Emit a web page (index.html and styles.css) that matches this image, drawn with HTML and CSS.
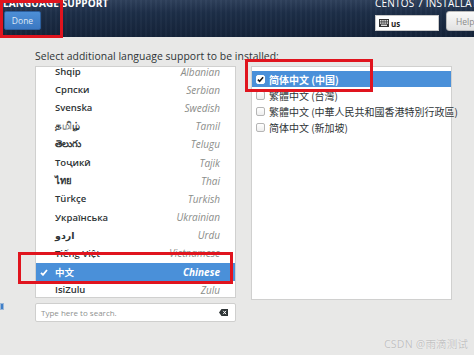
FILE: index.html
```html
<!DOCTYPE html>
<html>
<head>
<meta charset="utf-8">
<link rel="stylesheet" href="styles.css">
</head>
<body>
<div class="screen">
  <header class="topbar">
    <div class="spoke-left">
      <div class="spoke-title">LANGUAGE SUPPORT</div>
      <button class="done">Done</button>
    </div>
    <div class="spoke-right">
      <div class="product">CENTOS 7 INSTALLATION</div>
      <div class="right-controls">
        <div class="kbd">
          <svg class="kbd-icon" width="10" height="8" viewBox="0 0 10 8"><rect x="0" y="0" width="10" height="8" fill="#333"/><g fill="#ddd"><rect x="1" y="1" width="1.5" height="1.5"/><rect x="3.2" y="1" width="1.5" height="1.5"/><rect x="5.4" y="1" width="1.5" height="1.5"/><rect x="7.6" y="1" width="1.5" height="1.5"/><rect x="1" y="3.3" width="1.5" height="1.5"/><rect x="3.2" y="3.3" width="1.5" height="1.5"/><rect x="5.4" y="3.3" width="1.5" height="1.5"/><rect x="7.6" y="3.3" width="1.5" height="1.5"/><rect x="2" y="5.6" width="6" height="1.4"/></g></svg>
          <span>us</span>
        </div>
        <button class="help">Help!</button>
      </div>
    </div>
  </header>

  <main class="content">
    <div class="prompt">Select additional language support to be installed:</div>
    <div class="panels">
      <div class="left-col">
        <div class="lang-box">
          <ul class="lang-list">
            <li class="lang"><span class="native">Shqip</span><span class="english">Albanian</span></li>
            <li class="lang"><span class="native">Српски</span><span class="english">Serbian</span></li>
            <li class="lang"><span class="native">Svenska</span><span class="english">Swedish</span></li>
            <li class="lang"><span class="native">தமிழ்</span><span class="english">Tamil</span></li>
            <li class="lang"><span class="native">తెలుగు</span><span class="english">Telugu</span></li>
            <li class="lang"><span class="native">Тоҷикӣ</span><span class="english">Tajik</span></li>
            <li class="lang"><span class="native">ไทย</span><span class="english">Thai</span></li>
            <li class="lang"><span class="native">Türkçe</span><span class="english">Turkish</span></li>
            <li class="lang"><span class="native">Українська</span><span class="english">Ukrainian</span></li>
            <li class="lang"><span class="native">اردو</span><span class="english">Urdu</span></li>
            <li class="lang"><span class="native">Tiếng Việt</span><span class="english">Vietnamese</span></li>
            <li class="lang selected">
              <svg class="tick" width="8" height="7" viewBox="0 0 8 7"><path d="M1 3.8 L3 5.8 L7 1" fill="none" stroke="#fff" stroke-width="1.8"/></svg>
              <span class="native">中文</span><span class="english">Chinese</span>
            </li>
            <li class="lang"><span class="native">IsiZulu</span><span class="english">Zulu</span></li>
          </ul>
        </div>
        <div class="search">
          <span class="placeholder">Type here to search.</span>
          <svg class="clear" width="9" height="7" viewBox="0 0 9 7"><path d="M0 3.5 L2.5 0 H9 V7 H2.5 Z" fill="#2e3436"/><path d="M4.2 1.8 L7 5.2 M7 1.8 L4.2 5.2" stroke="#fff" stroke-width="1"/></svg>
        </div>
      </div>
      <div class="right-col">
        <ul class="locale-list">
          <li class="locale selected"><span class="cb checked"><svg width="8" height="7" viewBox="0 0 8 7"><path d="M1 3.6 L3 5.6 L7 1" fill="none" stroke="#1a1a1a" stroke-width="1.8"/></svg></span>简体中文 (中国)</li>
          <li class="locale"><span class="cb"></span>繁體中文 (台灣)</li>
          <li class="locale"><span class="cb"></span>繁體中文 (中華人民共和國香港特別行政區)</li>
          <li class="locale"><span class="cb"></span>简体中文 (新加坡)</li>
        </ul>
      </div>
    </div>
  </main>

  <div class="mark mark-done"></div>
  <div class="mark mark-chinese"></div>
  <div class="mark mark-locale"></div>
  <div class="edge-icon"></div>
  <div class="watermark">CSDN @雨滴测试</div>
</div>
</body>
</html>
```

FILE: styles.css
```css
* { box-sizing: border-box; }
html, body { margin: 0; padding: 0; }
body {
  width: 474px;
  height: 355px;
  overflow: hidden;
  background: #e8e8e7;
  font-family: "Open Sans", "Noto Sans", "DejaVu Sans", "Noto Sans CJK SC", sans-serif;
}
.screen {
  position: relative;
  width: 474px;
  height: 355px;
  overflow: hidden;
  background: #e8e8e7;
}
.topbar {
  display: flex;
  height: 37px;
  background:
    repeating-linear-gradient(90deg, rgba(255,255,255,0.025) 0 2px, rgba(0,0,0,0.03) 2px 5px),
    linear-gradient(180deg, #2f415c 0%, #1d2e48 35%, #152339 100%);
  color: #fff;
  overflow: hidden;
}
.spoke-left {
  width: 375px;
  flex: none;
  padding-left: 3px;
}
.spoke-title {
  margin-top: -2px;
  height: 10px;
  font-size: 10px;
  line-height: 11px;
  font-weight: 700;
  letter-spacing: 0.1px;
}
.done {
  display: block;
  margin-top: 3px;
  margin-left: 1px;
  width: 37px;
  height: 19px;
  padding: 0;
  border: 1px solid #2c5f9e;
  border-radius: 2px;
  background: linear-gradient(180deg, #4d8fd6, #3b78c2);
  color: #dfe9f6;
  font-family: inherit;
  font-size: 8.5px;
}
.spoke-right {
  flex: none;
  white-space: nowrap;
}
.product {
  margin-top: -2px;
  height: 10px;
  font-size: 10px;
  line-height: 11px;
  letter-spacing: 0.2px;
}
.right-controls {
  display: flex;
  align-items: flex-start;
  gap: 7px;
  margin-top: 3px;
}
.kbd {
  margin-top: 4px;
  width: 64px;
  height: 16px;
  background: #fff;
  border: 1px solid #c9c9c9;
  display: flex;
  align-items: center;
  padding-left: 3px;
  gap: 2px;
  color: #1f1f1f;
  font-size: 8px;
  font-weight: 700;
}
.help {
  width: 40px;
  height: 20px;
  padding: 0 0 0 9px;
  text-align: left;
  border: 1px solid #b9b9b9;
  border-radius: 3px;
  background: linear-gradient(180deg, #fafafa, #e2e2e2);
  color: #8a8a8a;
  font-family: "Open Sans", sans-serif;
  font-size: 8.5px;
  text-transform: none;
}

.content {
  padding-left: 35px;
}
.prompt {
  margin-top: 12px;
  height: 14px;
  font-size: 10.4px;
  line-height: 14px;
  color: #2e3436;
  letter-spacing: 0.05px;
}
.panels {
  display: flex;
  gap: 15px;
  margin-top: 3px;
}
.left-col {
  width: 201px;
  display: flex;
  flex-direction: column;
  gap: 5px;
}
.lang-box {
  height: 232px;
  background: #fff;
  border: 1px solid #d0d0cf;
  overflow: hidden;
}
.lang-list {
  list-style: none;
  margin: -4.5px 0 0 0;
  padding: 0;
}
.lang {
  position: relative;
  display: flex;
  align-items: center;
  justify-content: space-between;
  height: 18.2px;
  padding: 0 15px 0 19px;
}
.native {
  font-size: 9.5px;
  font-weight: 600;
  color: #2e3436;
}
.english {
  font-size: 10px;
  font-style: italic;
  color: #8b8d8a;
}
.lang.selected {
  background: #4a90d9;
}
.lang.selected .native,
.lang.selected .english {
  color: #fff;
  font-weight: 700;
}
.tick {
  position: absolute;
  left: 4px;
  top: 6px;
}
.search {
  height: 19px;
  background: #fff;
  border: 1px solid #cfcfce;
  border-radius: 2px;
  display: flex;
  align-items: center;
  justify-content: space-between;
  padding: 0 7px 0 5px;
}
.placeholder {
  font-size: 8px;
  color: #8e9190;
}
.right-col {
  width: 201px;
  height: 234px;
  background: #fff;
  border: 1px solid #d0d0cf;
  padding-top: 4px;
}
.locale-list {
  list-style: none;
  margin: 0;
  padding: 0;
}
.locale {
  display: flex;
  align-items: center;
  height: 16px;
  padding-left: 4px;
  gap: 4px;
  font-family: "Noto Sans CJK SC", "Noto Sans", sans-serif;
  font-size: 10px;
  color: #2e3436;
  white-space: nowrap;
}
.locale.selected {
  background: #4a90d9;
  color: #fff;
  font-weight: 700;
}
.cb {
  width: 9px;
  height: 9px;
  flex: none;
  border: 1px solid #b5b5b5;
  border-radius: 2px;
  background: linear-gradient(180deg, #fff, #eee);
  display: flex;
  align-items: center;
  justify-content: center;
}
.cb.checked {
  background: #fff;
  border-color: #fff;
}

.mark {
  position: absolute;
  border: 3px solid #e0141e;
}
.mark-done { left: 0; top: 0; width: 63px; height: 38px; }
.mark-chinese { left: 18px; top: 252px; width: 215px; height: 32px; }
.mark-locale { left: 245px; top: 59px; width: 128px; height: 33px; }
.edge-icon {
  position: absolute;
  left: 0;
  top: 303px;
  width: 4px;
  height: 7px;
  background: #3f7fc8;
  border: 1px solid #9db8d8;
}
.watermark {
  position: absolute;
  left: 384px;
  top: 336px;
  font-family: "Noto Sans", "Noto Sans CJK SC", sans-serif;
  font-size: 10.5px;
  color: #c2c2c2;
  text-shadow: 0 0 1px #ffffff;
  letter-spacing: 0.2px;
}
```
